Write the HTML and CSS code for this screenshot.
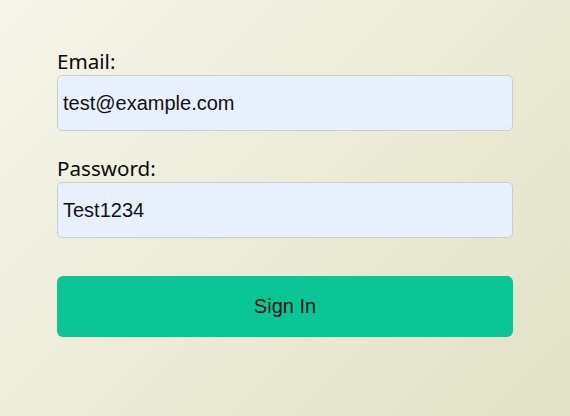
FILE: index.html
```html
<!DOCTYPE html>
<html lang="en">
<head>
<meta charset="utf-8">
<title>Sign In</title>
<link rel="stylesheet" href="styles.css">
</head>
<body>
<form class="login">
  <div class="field">
    <label class="label" for="email">Email:</label>
    <input class="input" id="email" type="text" value="test@example.com">
  </div>
  <div class="field">
    <label class="label" for="password">Password:</label>
    <input class="input" id="password" type="text" value="Test1234">
  </div>
  <button class="submit" type="button">Sign In</button>
</form>
</body>
</html>
```

FILE: styles.css
```css
html, body {
  margin: 0;
  height: 100%;
}
body {
  background: linear-gradient(135deg, #f5f5ea 0%, #e2e2c7 100%);
  font-family: "Liberation Sans", Arial, sans-serif;
}
.login {
  width: 456px;
  padding: 48px 0 0 57px;
  display: flex;
  flex-direction: column;
}
.field {
  display: flex;
  flex-direction: column;
  margin-bottom: 24px;
}
.label {
  font-family: "Noto Sans", "Open Sans", sans-serif;
  font-size: 20.6px;
  line-height: 27px;
  color: #0a0a0a;
}
.input {
  box-sizing: border-box;
  height: 56px;
  margin: 0;
  padding: 0 5px;
  border: 1px solid #cdcdcd;
  border-radius: 5px;
  background: #e8f0fe;
  font-family: "Liberation Sans", Arial, sans-serif;
  font-size: 20px;
  color: #111;
  outline: none;
}
.submit {
  margin-top: 14px;
  height: 61px;
  border: none;
  border-radius: 6px;
  background: #0ac696;
  font-family: "Liberation Sans", Arial, sans-serif;
  font-size: 20px;
  color: #111;
}
```
